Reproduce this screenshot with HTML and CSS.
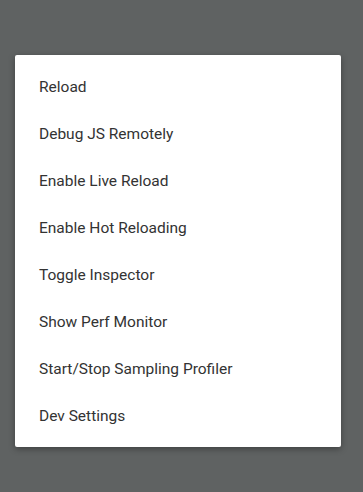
FILE: index.html
```html
<!DOCTYPE html>
<html lang="en">
<head>
    <meta charset="UTF-8">
    <meta name="viewport" content="width=device-width, initial-scale=1.0">
    <title>Dev Menu</title>
    <link rel="stylesheet" href="styles.css">
</head>
<body>
    <div class="dialog">
        <ul class="menu">
            <li class="menu-item">Reload</li>
            <li class="menu-item">Debug JS Remotely</li>
            <li class="menu-item">Enable Live Reload</li>
            <li class="menu-item">Enable Hot Reloading</li>
            <li class="menu-item">Toggle Inspector</li>
            <li class="menu-item">Show Perf Monitor</li>
            <li class="menu-item">Start/Stop Sampling Profiler</li>
            <li class="menu-item">Dev Settings</li>
        </ul>
    </div>
</body>
</html>
```

FILE: styles.css
```css
html, body {
    height: 100%;
}

body {
    margin: 0;
    background-color: #5f6262;
    font-family: Roboto, 'Noto Sans', sans-serif;
}

.dialog {
    position: relative;
    top: 55px;
    margin: 0 22px 0 15px;
    background-color: #ffffff;
    border-radius: 2px;
    box-shadow: 0 2px 6px rgba(0, 0, 0, 0.35);
}

.menu {
    list-style: none;
    margin: 0;
    padding: 9px 0 7px;
}

.menu-item {
    height: 47px;
    line-height: 47px;
    padding-left: 24px;
    font-size: 15.5px;
    color: #333333;
}
```
